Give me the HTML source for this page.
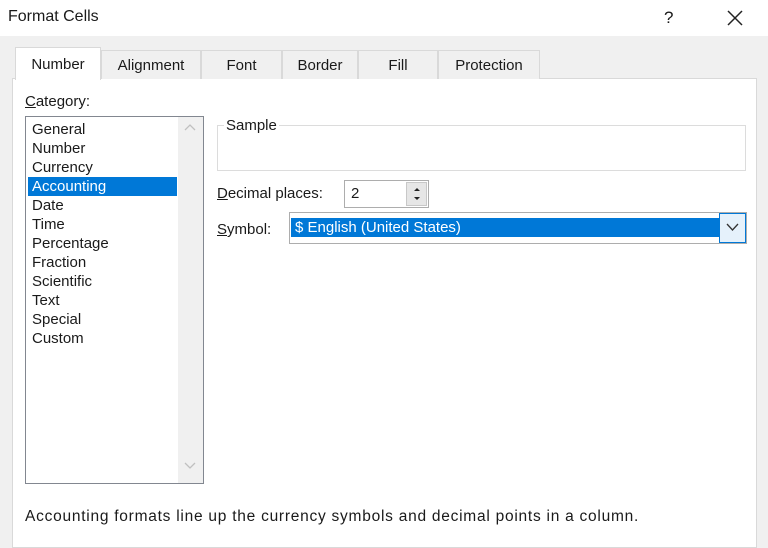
<!DOCTYPE html>
<html><head><style>
*{margin:0;padding:0;box-sizing:border-box}
body{width:768px;height:540px;background:#f0f0f0;font-family:"Liberation Sans",sans-serif;font-size:15px;color:#1a1a1a;position:relative;overflow:hidden}
.a{position:absolute;white-space:nowrap}
.title{left:0;top:0;width:768px;height:36px;background:#fff}
.tab{position:absolute;top:50px;height:29px;border:1px solid #d9d9d9;border-bottom:none;background:#f0f0f0;text-align:center;line-height:29px;font-size:15px}
.panel{left:12px;top:78px;width:745px;height:470px;background:#fff;border:1px solid #d9d9d9}
.item{position:absolute;left:6px;height:19px;line-height:19px}
u{text-decoration:underline}
</style></head><body>
<div class="a title"></div>
<div class="a" style="left:8px;top:8px;font-size:16px">Format Cells</div>
<div class="a" style="left:664px;top:8px;font-size:17px">?</div>
<svg class="a" style="left:726px;top:9px" width="18" height="18"><path d="M2 2L16 16M16 2L2 16" stroke="#222" stroke-width="1.5"/></svg>
<div class="a panel"></div>
<div class="tab" style="left:101px;width:100px">Alignment</div>
<div class="tab" style="left:201px;width:81px">Font</div>
<div class="tab" style="left:282px;width:76px">Border</div>
<div class="tab" style="left:358px;width:80px">Fill</div>
<div class="tab" style="left:438px;width:102px">Protection</div>
<div class="tab" style="left:15px;top:47px;height:33px;width:86px;background:#fff;line-height:33px;z-index:2">Number</div>
<div class="a" style="left:25px;top:93px"><u>C</u>ategory:</div>
<div class="a" style="left:25px;top:116px;width:179px;height:368px;border:1px solid #828790;background:#fff">
 <div class="a" style="left:152px;top:0;width:25px;height:366px;background:#f0f0f0"></div>
 <svg class="a" style="left:158px;top:6px" width="12" height="10"><path d="M1 7L6 2L11 7" stroke="#c0c0c0" fill="none" stroke-width="1.3"/></svg>
 <svg class="a" style="left:158px;top:344px" width="12" height="10"><path d="M1 2L6 7L11 2" stroke="#c0c0c0" fill="none" stroke-width="1.3"/></svg>
 <div class="item" style="top:3px">General</div>
 <div class="item" style="top:22px">Number</div>
 <div class="item" style="top:41px">Currency</div>
 <div class="item" style="top:60px;left:2px;width:149px;padding-left:4px;background:#0078d7;color:#fff">Accounting</div>
 <div class="item" style="top:79px">Date</div>
 <div class="item" style="top:98px">Time</div>
 <div class="item" style="top:117px">Percentage</div>
 <div class="item" style="top:136px">Fraction</div>
 <div class="item" style="top:155px">Scientific</div>
 <div class="item" style="top:174px">Text</div>
 <div class="item" style="top:193px">Special</div>
 <div class="item" style="top:212px">Custom</div>
</div>
<div class="a" style="left:217px;top:125px;width:529px;height:46px;border:1px solid #dcdcdc"></div>
<div class="a" style="left:224px;top:117px;background:#fff;padding:0 2px">Sample</div>
<div class="a" style="left:217px;top:185px"><u>D</u>ecimal places:</div>
<div class="a" style="left:344px;top:180px;width:85px;height:28px;border:1px solid #adadad;background:#fff;padding:4px 6px">2</div>
<div class="a" style="left:406px;top:182px;width:21px;height:24px;background:#e6e6e6;border:1px solid #c8c8c8"></div>
<svg class="a" style="left:411px;top:184px" width="12" height="20"><path d="M3 7L6 4L9 7Z M3 13L6 16L9 13Z" fill="#222"/></svg>
<div class="a" style="left:217px;top:221px"><u>S</u>ymbol:</div>
<div class="a" style="left:289px;top:212px;width:458px;height:32px;border:1px solid #adadad;background:#fff"></div>
<div class="a" style="left:291px;top:218px;width:428px;height:19px;background:#0078d7;color:#fff;line-height:19px;padding-left:4px">$ English (United States)</div>
<div class="a" style="left:719px;top:213px;width:27px;height:30px;background:#e5f1fb;border:1px solid #0078d7"></div>
<svg class="a" style="left:726px;top:223px" width="13" height="9"><path d="M1 1L6.5 7L12 1" stroke="#333" fill="none" stroke-width="1.3"/></svg>
<div class="a" style="left:25px;top:508px;font-size:15.5px;letter-spacing:0.75px">Accounting formats line up the currency symbols and decimal points in a column.</div>
</body></html>
